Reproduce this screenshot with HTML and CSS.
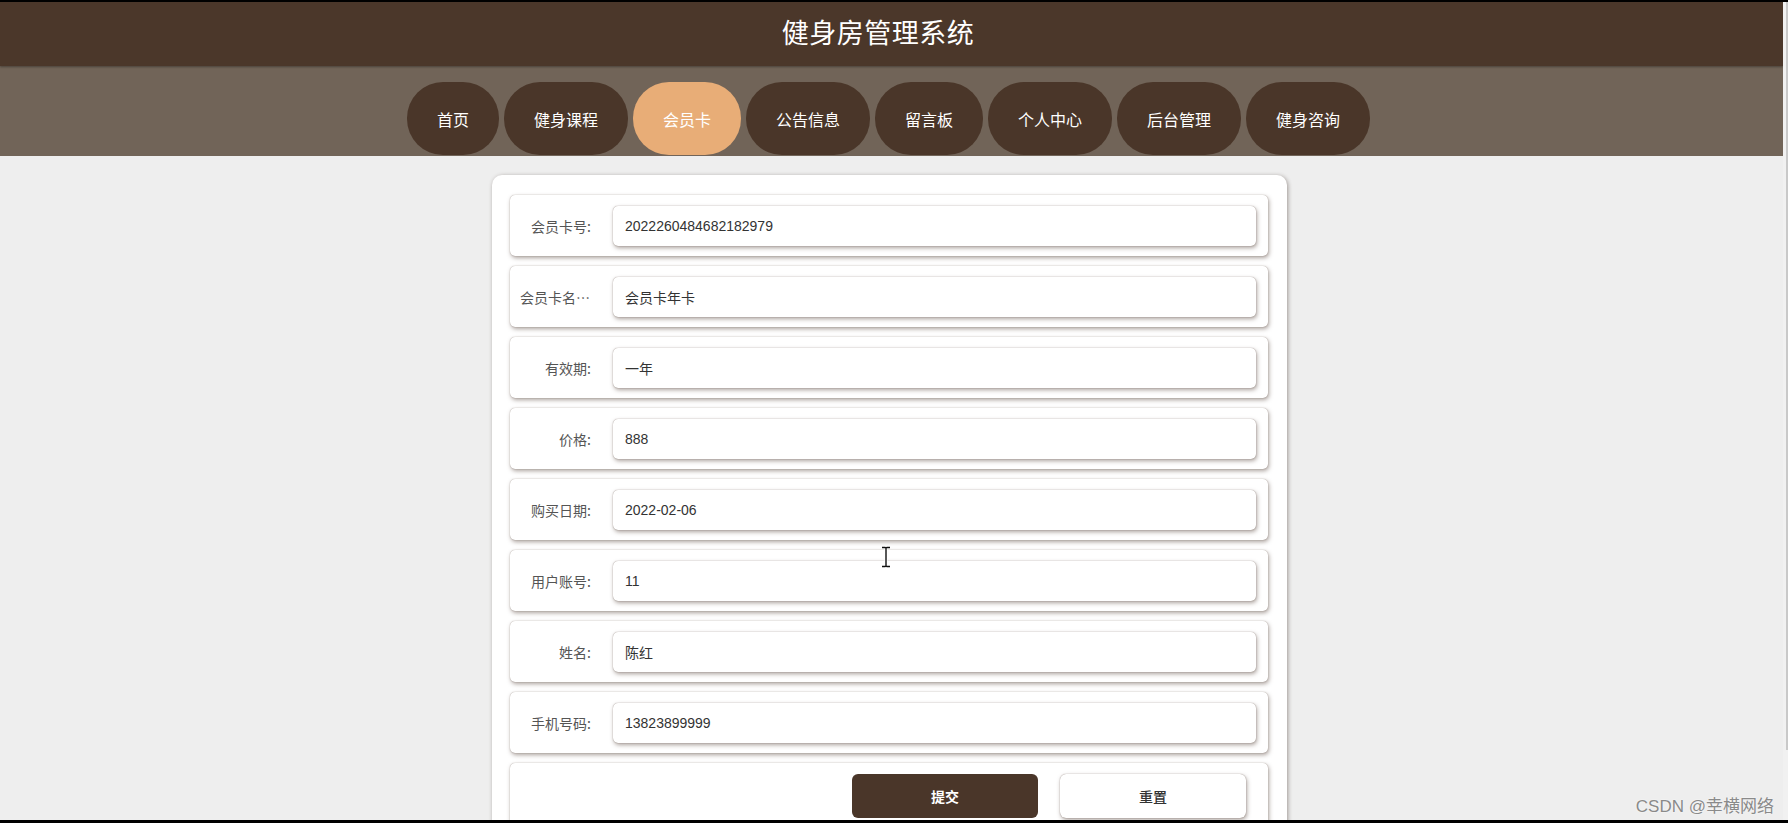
FILE: index.html
```html
<!DOCTYPE html>
<html lang="zh-CN">
<head>
<meta charset="utf-8">
<title>健身房管理系统</title>
<link rel="stylesheet" href="styles.css">
</head>
<body>
<div class="screen">
  <div class="frame-top"></div>
  <div class="viewport">
    <div class="page">
      <header class="topbar">
        <h1 class="title">健身房管理系统</h1>
      </header>
      <nav class="nav">
        <a class="nav-item">首页</a>
        <a class="nav-item">健身课程</a>
        <a class="nav-item active">会员卡</a>
        <a class="nav-item">公告信息</a>
        <a class="nav-item">留言板</a>
        <a class="nav-item">个人中心</a>
        <a class="nav-item">后台管理</a>
        <a class="nav-item">健身咨询</a>
      </nav>
      <main class="content">
        <form class="card">
          <div class="field">
            <label class="field-label">会员卡号:</label>
            <input class="field-input" readonly value="2022260484682182979">
          </div>
          <div class="field">
            <label class="field-label">会员卡名称:</label>
            <input class="field-input" readonly value="会员卡年卡">
          </div>
          <div class="field">
            <label class="field-label">有效期:</label>
            <input class="field-input" readonly value="一年">
          </div>
          <div class="field">
            <label class="field-label">价格:</label>
            <input class="field-input" readonly value="888">
          </div>
          <div class="field">
            <label class="field-label">购买日期:</label>
            <input class="field-input" readonly value="2022-02-06">
          </div>
          <div class="field">
            <label class="field-label">用户账号:</label>
            <input class="field-input" readonly value="11">
          </div>
          <div class="field">
            <label class="field-label">姓名:</label>
            <input class="field-input" readonly value="陈红">
          </div>
          <div class="field">
            <label class="field-label">手机号码:</label>
            <input class="field-input" readonly value="13823899999">
          </div>
          <div class="field field-actions">
            <button type="button" class="btn btn-primary">提交</button>
            <button type="button" class="btn btn-plain">重置</button>
          </div>
        </form>
      </main>
    </div>
    <div class="scrollbar"><div class="scrollbar-thumb"></div></div>
  </div>
  <div class="frame-bottom"></div>
  <div class="watermark">CSDN @幸横网络</div>
  <svg class="cursor" width="12" height="24" viewBox="0 0 12 24">
    <path d="M2 2.5h3.2c0.5 0 0.8 0.4 0.8 1v17c0 0.6-0.3 1-0.8 1H2M10 2.5H6.8c-0.5 0-0.8 0.4-0.8 1v17c0 0.6 0.3 1 0.8 1H10" fill="none" stroke="#fff" stroke-width="3"/>
    <path d="M2 2.5h3.2c0.5 0 0.8 0.4 0.8 1v17c0 0.6-0.3 1-0.8 1H2M10 2.5H6.8c-0.5 0-0.8 0.4-0.8 1v17c0 0.6 0.3 1 0.8 1H10" fill="none" stroke="#111" stroke-width="1.4"/>
  </svg>
</div>
</body>
</html>
```

FILE: styles.css
```css
* {
  box-sizing: border-box;
}

html, body {
  margin: 0;
  padding: 0;
  background: #eeeeee;
}

body {
  font-family: "Noto Sans CJK SC", "Liberation Sans", sans-serif;
  color: #333;
}

.screen {
  position: relative;
  width: 1788px;
  height: 823px;
  display: flex;
  flex-direction: column;
  overflow: hidden;
  background: #eeeeee;
}

.frame-top {
  height: 2px;
  background: #000;
  flex: none;
}

.frame-bottom {
  height: 3px;
  background: #000;
  flex: none;
}

.viewport {
  flex: 1;
  min-height: 0;
  display: flex;
  overflow: hidden;
}

.page {
  flex: 1;
  min-width: 0;
  overflow: hidden;
  background: #eeeeee;
}

.scrollbar {
  width: 5px;
  flex: none;
  background: #f1f1f1;
  display: flex;
  justify-content: flex-end;
}

.scrollbar-thumb {
  width: 2px;
  height: 748px;
  background: #c9c9c9;
}

/* header */
.topbar {
  height: 64px;
  background: #4b372a;
  display: flex;
  align-items: center;
  justify-content: center;
  padding-right: 27px;
  padding-bottom: 6px;
  box-shadow: 0 1px 2px rgba(0, 0, 0, 0.35);
  position: relative;
  z-index: 1;
}

.title {
  margin: 0;
  font-size: 27px;
  font-weight: 400;
  color: #fff;
  letter-spacing: 0.5px;
  line-height: 1;
}

/* nav */
.nav {
  height: 90px;
  background: #716458;
  display: flex;
  justify-content: center;
  align-items: flex-start;
  gap: 5px;
  padding-top: 16px;
  padding-right: 6px;
}

.nav-item {
  height: 73px;
  padding: 0 30px;
  border-radius: 36px;
  background: #4a3629;
  color: #fff;
  font-size: 16px;
  display: flex;
  align-items: center;
  justify-content: center;
  white-space: nowrap;
  cursor: pointer;
}

.nav-item.active {
  background: #e8ad77;
}

/* content */
.content {
  padding-top: 19px;
  padding-right: 4px;
  display: flex;
  justify-content: center;
}

.card {
  width: 795px;
  background: #fff;
  border-radius: 10px;
  padding: 20px 19px 0 18px;
  box-shadow: 1px 1px 4px rgba(60, 45, 35, 0.45);
  margin: 0;
}

.field {
  height: 61px;
  margin-bottom: 10px;
  border-radius: 5px;
  background: #fff;
  box-shadow: 0 0 1px rgba(90, 70, 60, 0.6), 1px 2px 4px rgba(90, 72, 62, 0.5);
  display: flex;
  align-items: center;
  padding: 1px 12px 0 10px;
}

.field-label {
  width: 75px;
  flex: none;
  padding-right: 4px;
  margin-right: 18px;
  text-align: right;
  font-size: 14px;
  color: #555;
  white-space: nowrap;
  overflow: hidden;
  text-overflow: ellipsis;
}

.field-input {
  flex: 1;
  min-width: 0;
  height: 40px;
  border: none;
  outline: none;
  border-radius: 5px;
  padding: 0 12px;
  font-family: "Liberation Sans", "Noto Sans CJK SC", sans-serif;
  font-size: 14px;
  color: #333;
  background: #fff;
  box-shadow: 0 0 1px rgba(90, 70, 60, 0.7), 1px 2px 4px rgba(90, 72, 62, 0.5);
}

.field-actions {
  justify-content: flex-end;
  align-items: flex-start;
  padding: 11px 22px 0 10px;
  height: 70px;
  gap: 22px;
}

.btn {
  width: 186px;
  height: 44px;
  border: none;
  border-radius: 6px;
  font-family: "Noto Sans CJK SC", "Liberation Sans", sans-serif;
  font-size: 14px;
  font-weight: 700;
  cursor: pointer;
}

.btn-primary {
  background: #4a3629;
  color: #fff;
}

.btn-plain {
  background: #fff;
  color: #333;
  font-weight: 500;
  box-shadow: 0 0 1px rgba(90, 70, 60, 0.7), 1px 2px 4px rgba(90, 72, 62, 0.5);
}

/* overlays */
.watermark {
  position: absolute;
  right: 14px;
  top: 792px;
  font-family: "Liberation Sans", "Noto Sans CJK SC", sans-serif;
  font-size: 17px;
  color: #8a8a8a;
  text-shadow: 0 0 2px #fff;
  white-space: nowrap;
}

.cursor {
  position: absolute;
  left: 880px;
  top: 545px;
}
```
